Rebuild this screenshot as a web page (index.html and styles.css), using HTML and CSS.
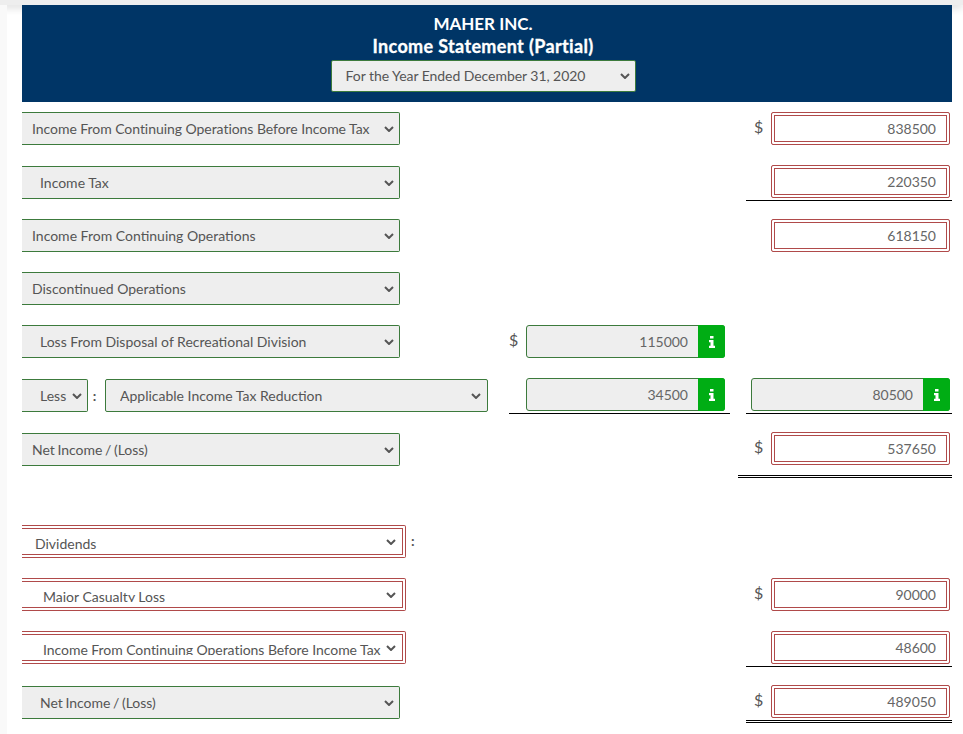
FILE: index.html
```html
<!DOCTYPE html>
<html lang="en">
<head>
    <meta charset="UTF-8">
    <title>Income Statement (Partial)</title>
    <link rel="stylesheet" href="styles.css">
</head>
<body>
    <div class="topbar"></div>
    <div class="page">
        <div class="statement">
            <!-- Kopf -->
            <div class="statement-head">
                <div class="company">MAHER INC.</div>
                <div class="title">Income Statement (Partial)</div>
                <select class="period"><option>For the Year Ended December 31, 2020</option></select>
            </div>

            <div class="rows">
                <div class="row row-54">
                    <div class="col-left"><select class="pick ok tight"><option>Income From Continuing Operations Before Income Tax</option></select></div>
                    <div class="col-mid"></div>
                    <div class="col-right">
                        <div class="cell"><span class="sym">$</span><input class="amount wrong" value="838500"></div>
                    </div>
                </div>
                <div class="row">
                    <div class="col-left"><select class="pick ok indent"><option>Income Tax</option></select></div>
                    <div class="col-mid"></div>
                    <div class="col-right up">
                        <div class="cell"><span class="sym"></span><input class="amount wrong" value="220350"></div>
                        <div class="rule"></div>
                    </div>
                </div>
                <div class="row">
                    <div class="col-left"><select class="pick ok"><option>Income From Continuing Operations</option></select></div>
                    <div class="col-mid"></div>
                    <div class="col-right">
                        <div class="cell"><span class="sym"></span><input class="amount wrong" value="618150"></div>
                    </div>
                </div>
                <div class="row">
                    <div class="col-left"><select class="pick ok"><option>Discontinued Operations</option></select></div>
                    <div class="col-mid"></div>
                    <div class="col-right"></div>
                </div>
                <div class="row row-54">
                    <div class="col-left"><select class="pick ok indent"><option>Loss From Disposal of Recreational Division</option></select></div>
                    <div class="col-mid">
                        <div class="cell"><span class="sym">$</span>
                            <div class="given"><input class="given-value" value="115000">
                                <span class="info"><svg width="8" height="12" viewBox="0 0 8 12"><path d="M2 0h3.5v2.6H2zM1 4h4.5v5.8H7V12H1V9.8h1.5V6.2H1z" fill="#fff"/></svg></span>
                            </div>
                        </div>
                    </div>
                    <div class="col-right"></div>
                </div>
                <div class="row row-54">
                    <div class="col-left less-line">
                        <select class="pick ok indent less"><option>Less</option></select>
                        <span class="colon">:</span>
                        <select class="pick ok boxed"><option>Applicable Income Tax Reduction</option></select>
                    </div>
                    <div class="col-mid up">
                        <div class="cell"><span class="sym"></span>
                            <div class="given"><input class="given-value" value="34500">
                                <span class="info"><svg width="8" height="12" viewBox="0 0 8 12"><path d="M2 0h3.5v2.6H2zM1 4h4.5v5.8H7V12H1V9.8h1.5V6.2H1z" fill="#fff"/></svg></span>
                            </div>
                        </div>
                        <div class="rule"></div>
                    </div>
                    <div class="col-right up">
                        <div class="cell cell-flat">
                            <div class="given"><input class="given-value" value="80500">
                                <span class="info"><svg width="8" height="12" viewBox="0 0 8 12"><path d="M2 0h3.5v2.6H2zM1 4h4.5v5.8H7V12H1V9.8h1.5V6.2H1z" fill="#fff"/></svg></span>
                            </div>
                        </div>
                        <div class="rule"></div>
                    </div>
                </div>
                <div class="row row-92">
                    <div class="col-left"><select class="pick ok slash"><option>Net Income / (Loss)</option></select></div>
                    <div class="col-mid"></div>
                    <div class="col-right up">
                        <div class="cell"><span class="sym">$</span><input class="amount wrong" value="537650"></div>
                        <div class="rule-double rule-wide"></div>
                    </div>
                </div>
                <div class="row">
                    <div class="col-left dividend-line">
                        <div class="bad-box"><select class="pick bad"><option>Dividends</option></select></div>
                        <span class="colon-small">:</span>
                    </div>
                    <div class="col-mid"></div>
                    <div class="col-right"></div>
                </div>
                <div class="row">
                    <div class="col-left">
                        <div class="bad-box"><select class="pick bad bad-indent"><option>Major Casualty Loss</option></select></div>
                    </div>
                    <div class="col-mid"></div>
                    <div class="col-right">
                        <div class="cell"><span class="sym">$</span><input class="amount wrong" value="90000"></div>
                    </div>
                </div>
                <div class="row row-55">
                    <div class="col-left">
                        <div class="bad-box"><select class="pick bad bad-indent tight"><option>Income From Continuing Operations Before Income Tax</option></select></div>
                    </div>
                    <div class="col-mid"></div>
                    <div class="col-right">
                        <div class="cell"><span class="sym"></span><input class="amount wrong" value="48600"></div>
                        <div class="rule"></div>
                    </div>
                </div>
                <div class="row">
                    <div class="col-left"><select class="pick ok indent slash"><option>Net Income / (Loss)</option></select></div>
                    <div class="col-mid"></div>
                    <div class="col-right up">
                        <div class="cell"><span class="sym">$</span><input class="amount wrong" value="489050"></div>
                        <div class="rule-double"></div>
                    </div>
                </div>
            </div>
        </div>
    </div>
</body>
</html>
```

FILE: styles.css
```css
/* Seite */
body { font-family: Lato, sans-serif; font-size: 14px; color: #555; background-color: #fff; margin: 0; padding: 0; overflow: hidden; }
.topbar { height: 5px; background-color: #eee; box-shadow: 0 2px 8px rgba(0,0,0,0.2); }
.page { border-left: 7px solid #f9f9f9; padding-left: 15px; width: 930px; }
.statement { position: relative; }

/* Kopf */
.statement-head { background-color: #003566; color: #fff; display: flex; flex-direction: column; align-items: center; height: 97px; padding: 8px 8px 0 0; box-sizing: border-box; }
.company, .title { font-size: 17px; font-weight: bold; line-height: 22px; }
.title { font-size: 18px; letter-spacing: 0.35px; -webkit-text-stroke: 0.3px #fff; }

/* Auswahlfelder */
.period, .pick { appearance: none; font-family: Lato, sans-serif; font-size: 14px; color: #555; background-image: url("data:image/svg+xml,%3Csvg xmlns='http://www.w3.org/2000/svg' width='10' height='6' viewBox='0 0 10 6'%3E%3Cpath d='M1 1l4 4 4-4' fill='none' stroke='%23555' stroke-width='2'/%3E%3C/svg%3E"); background-repeat: no-repeat; background-position: right 5px center; }
.period { width: 305px; height: 32px; margin-top: 3px; padding: 0 0 2px 14px; letter-spacing: -0.05px; background-color: #eee; border: 1px solid #3c7a3c; border-radius: 2px; }
.pick { width: 378px; height: 33px; padding: 0 0 0 10px; border-radius: 0 2px 2px 0; }
.ok { background-color: #eee; border: 1px solid #3c7a3c; border-left: none; }
.indent { padding-left: 18px; }
.tight { letter-spacing: -0.05px; }
.slash { word-spacing: -1px; }
.bad-box { width: 384px; height: 33px; box-sizing: border-box; padding: 2px 2px 2px 0; border: 1px solid #b04a4a; border-left: none; border-radius: 0 2px 2px 0; flex: none; }
.bad { display: block; width: 100%; height: 27px; padding: 6px 0 5px 13px; background-color: #fff; background-position: right 6px center; border: 1px solid #b04a4a; border-left: none; border-radius: 0; }
.bad-indent { padding-left: 21px; }
.less { width: 66px; flex: none; }
.boxed { width: 383px; padding-left: 14px; border-left: 1px solid #3c7a3c; border-radius: 2px; background-position: right 6px center; }
.colon { width: 13px; margin-right: 4px; text-align: center; line-height: 33px; font-weight: bold; }
.colon-small { margin-left: 5px; line-height: 32px; font-weight: bold; }

/* Zeilen */
.rows { padding-top: 10px; }
.row { display: flex; height: 53px; }
.row-54 { height: 54px; }
.row-55 { height: 55px; }
.row-92 { height: 92px; }
.col-left { width: 487px; display: flex; align-items: flex-start; }
.col-mid { width: 221px; margin-right: 16px; }
.col-right { width: 206px; }
.up { margin-top: -1px; }

/* Betraege */
.cell { display: flex; height: 33px; padding-left: 8px; }
.col-mid .cell { padding-left: 0; }
.cell-flat { padding-left: 5px; }
.sym { width: 17px; font-size: 16px; line-height: 30px; flex: none; }
.amount { width: 179px; height: 33px; box-sizing: border-box; padding: 0 13px 0 0; text-align: right; font-family: Lato, sans-serif; font-size: 14px; color: #666; background-color: #fff; border: 1px solid #b04a4a; border-radius: 2px; box-shadow: inset 0 0 0 2px #fff, inset 0 0 0 3px #b04a4a; }
.given { width: 199px; height: 33px; box-sizing: border-box; display: flex; background-color: #eee; border: 1px solid #3c7a3c; border-radius: 3px; }
.given-value { flex: 1; min-width: 0; padding: 0 10px 0 0; text-align: right; font-family: Lato, sans-serif; font-size: 14px; color: #666; background: none; border: none; }
.info { width: 27px; margin: -1px -1px -1px 0; flex: none; display: flex; align-items: center; justify-content: center; background-color: #00ad14; border-radius: 0 3px 3px 0; }

/* Summenlinien */
.rule { height: 1px; margin-top: 2px; background-color: #000; }
.rule-double { height: 3px; margin-top: 2px; border-top: 1px solid #000; border-bottom: 1px solid #000; box-sizing: border-box; }
.rule-wide { margin-top: 10px; margin-left: -8px; }
```
